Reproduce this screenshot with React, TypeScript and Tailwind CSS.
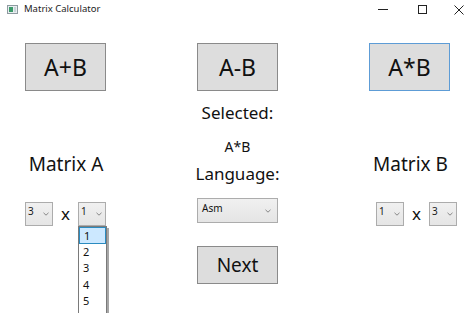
import React from "react";

function Chevron({ className = "" }: { className?: string }) {
  return (
    <svg width="6" height="4" viewBox="0 0 6 4" className={className}>
      <path d="M0.5 0.8 L3 3.2 L5.5 0.8" fill="none" stroke="#7a7a7a" strokeWidth="0.9" />
    </svg>
  );
}

function Combo({ value, children }: { value: string; children?: React.ReactNode }) {
  return (
    <div className="relative flex h-[24px] w-[28px] justify-between border border-[#acacac] bg-gradient-to-b from-[#f0f0f0] to-[#e5e5e5] pl-[2px] pr-[3px]">
      <span className="pt-[1px] text-[10px] leading-[14px] text-[#1a1a1a]">{value}</span>
      <Chevron className="mt-[9px]" />
      {children}
    </div>
  );
}

function Btn({ label, h = "h-[48px]", blue = false, size = "text-[23px]" }: { label: string; h?: string; blue?: boolean; size?: string }) {
  return (
    <div
      className={`flex w-[81px] ${h} items-center justify-center border ${blue ? "border-[#5d9cd6]" : "border-[#8a8a8a]"} bg-[#dddddd] ${size} text-[#111]`}
    >
      {label}
    </div>
  );
}

export default function App() {
  const items = ["1", "2", "3", "4", "5"];
  return (
    <div className="relative h-[313px] w-[474px] overflow-hidden bg-white font-['Noto_Sans',sans-serif] text-[#111]">
      {/* title bar */}
      <div className="flex h-[30px] items-start">
        <svg width="11" height="9" viewBox="0 0 11 9" className="ml-[7px] mt-[5px]">
          <rect x="0.5" y="0.5" width="10" height="8" fill="#e8eef0" stroke="#8e9aa0" />
          <rect x="2" y="2" width="4" height="5" fill="#3b9a6a" />
          <rect x="7" y="2" width="2" height="5" fill="#c8d4d8" />
        </svg>
        <span className="ml-[6px] mt-[2px] text-[9.5px] leading-[14px] text-[#222]">Matrix Calculator</span>
        <div className="ml-auto flex items-start">
          <svg width="10" height="10" viewBox="0 0 10 10" className="mt-[4px]">
            <line x1="0" y1="5.5" x2="10" y2="5.5" stroke="#222" strokeWidth="1" />
          </svg>
          <svg width="9" height="9" viewBox="0 0 9 9" className="ml-[30px] mt-[5px]">
            <rect x="0.5" y="0.5" width="8" height="8" fill="none" stroke="#222" strokeWidth="1" />
          </svg>
          <svg width="10" height="10" viewBox="0 0 10 10" className="ml-[27px] mr-[10px] mt-[5px]">
            <line x1="0.5" y1="0.5" x2="9.5" y2="9.5" stroke="#222" strokeWidth="1" />
            <line x1="9.5" y1="0.5" x2="0.5" y2="9.5" stroke="#222" strokeWidth="1" />
          </svg>
        </div>
      </div>

      <div className="flex">
        {/* column 1 */}
        <div className="flex w-[158px] flex-col pl-[25px]">
          <div className="mt-[13px]">
            <Btn label="A+B" />
          </div>
          <div className="mt-[59px] w-[82px] text-center text-[19px] leading-[28px]">Matrix A</div>
          <div className="mt-[24px] flex items-center">
            <Combo value="3" />
            <span className="w-[25px] text-center text-[17px] leading-[20px]">x</span>
            <Combo value="1">
              <div className="absolute left-[-1px] top-[23px] z-10 h-[100px] w-[29px] border border-[#7a7a7a] bg-white shadow-[2px_2px_0_rgba(0,0,0,0.35)]">
                {items.map((it, i) => (
                  <div
                    key={it}
                    className={`h-[16.5px] pl-[4px] text-[11px] leading-[16.5px] ${i === 0 ? "border border-[#2b8bc0] bg-[#cce8ff] pl-[3px] leading-[14.5px]" : ""}`}
                  >
                    {it}
                  </div>
                ))}
              </div>
            </Combo>
          </div>
        </div>

        {/* column 2 */}
        <div className="flex w-[158px] flex-col items-center pl-[1px]">
          <div className="mt-[13px]">
            <Btn label="A-B" />
          </div>
          <div className="mt-[10px] text-[17px] leading-[24px]">Selected:</div>
          <div className="mt-[12px] text-[14px] leading-[20px]">A*B</div>
          <div className="mt-[5px] text-[17px] leading-[24px]">Language:</div>
          <div className="mt-[12px] flex h-[25px] w-[81px] justify-between border border-[#acacac] bg-gradient-to-b from-[#f0f0f0] to-[#e5e5e5] pl-[4px] pr-[6px]">
            <span className="pt-[2px] text-[10px] leading-[14px]">Asm</span>
            <Chevron className="mt-[10px]" />
          </div>
          <div className="mt-[23px]">
            <Btn label="Next" h="h-[38px]" size="text-[19px]" />
          </div>
        </div>

        {/* column 3 */}
        <div className="flex w-[158px] flex-col pl-[53px]">
          <div className="mt-[13px]">
            <Btn label="A*B" blue />
          </div>
          <div className="mt-[59px] w-[83px] text-center text-[19px] leading-[28px]">Matrix B</div>
          <div className="ml-[7px] mt-[24px] flex items-center">
            <Combo value="1" />
            <span className="w-[25px] text-center text-[17px] leading-[20px]">x</span>
            <Combo value="3" />
          </div>
        </div>
      </div>
    </div>
  );
}
